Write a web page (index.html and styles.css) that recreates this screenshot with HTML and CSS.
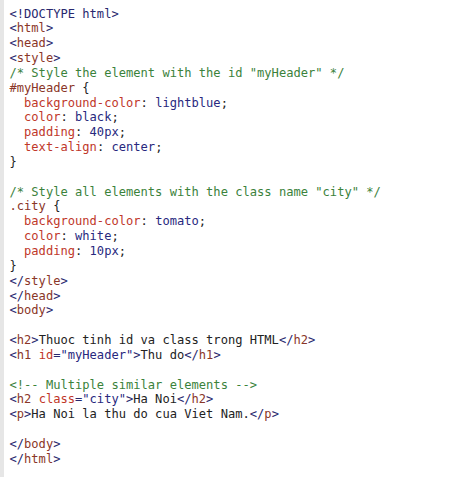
FILE: index.html
```html
<!DOCTYPE html>
<html>
<head>
<meta charset="utf-8">
<link rel="stylesheet" href="styles.css">
</head>
<body>
<div class="editor">
<pre class="code"><span class="b">&lt;!DOCTYPE html&gt;</span>
<span class="b">&lt;</span><span class="t">html</span><span class="b">&gt;</span>
<span class="b">&lt;</span><span class="t">head</span><span class="b">&gt;</span>
<span class="b">&lt;</span><span class="t">style</span><span class="b">&gt;</span>
<span class="c">/* Style the element with the id "myHeader" */</span>
<span class="t">#myHeader</span> <span class="x">{</span>
  <span class="p">background-color</span><span class="x">:</span> <span class="v">lightblue</span><span class="x">;</span>
  <span class="p">color</span><span class="x">:</span> <span class="v">black</span><span class="x">;</span>
  <span class="p">padding</span><span class="x">:</span> <span class="v">40px</span><span class="x">;</span>
  <span class="p">text-align</span><span class="x">:</span> <span class="v">center</span><span class="x">;</span>
<span class="x">}</span>

<span class="c">/* Style all elements with the class name "city" */</span>
<span class="t">.city</span> <span class="x">{</span>
  <span class="p">background-color</span><span class="x">:</span> <span class="v">tomato</span><span class="x">;</span>
  <span class="p">color</span><span class="x">:</span> <span class="v">white</span><span class="x">;</span>
  <span class="p">padding</span><span class="x">:</span> <span class="v">10px</span><span class="x">;</span>
<span class="x">}</span>
<span class="b">&lt;/</span><span class="t">style</span><span class="b">&gt;</span>
<span class="b">&lt;/</span><span class="t">head</span><span class="b">&gt;</span>
<span class="b">&lt;</span><span class="t">body</span><span class="b">&gt;</span>

<span class="b">&lt;</span><span class="t">h2</span><span class="b">&gt;</span>Thuoc tinh id va class trong HTML<span class="b">&lt;/</span><span class="t">h2</span><span class="b">&gt;</span>
<span class="b">&lt;</span><span class="t">h1</span> <span class="a">id</span><span class="b">=</span><span class="v">"myHeader"</span><span class="b">&gt;</span>Thu do<span class="b">&lt;/</span><span class="t">h1</span><span class="b">&gt;</span>

<span class="c">&lt;!-- Multiple similar elements --&gt;</span>
<span class="b">&lt;</span><span class="t">h2</span> <span class="a">class</span><span class="b">=</span><span class="v">"city"</span><span class="b">&gt;</span>Ha Noi<span class="b">&lt;/</span><span class="t">h2</span><span class="b">&gt;</span>
<span class="b">&lt;</span><span class="t">p</span><span class="b">&gt;</span>Ha Noi la thu do cua Viet Nam.<span class="b">&lt;/</span><span class="t">p</span><span class="b">&gt;</span>

<span class="b">&lt;/</span><span class="t">body</span><span class="b">&gt;</span>
<span class="b">&lt;/</span><span class="t">html</span><span class="b">&gt;</span></pre>
</div>
</body>
</html>
```

FILE: styles.css
```css
html, body {
  margin: 0;
  padding: 0;
  background: #ffffff;
}
.editor {
  border-left: 4px solid #e6e6e6;
  min-height: 477px;
  box-sizing: border-box;
  padding: 6.5px 0 0 5.5px;
}
.code {
  margin: 0;
  font-family: "DejaVu Sans Mono", "Liberation Mono", monospace;
  font-size: 12.1px;
  line-height: 14.85px;
  color: #222222;
  white-space: pre;
}
.b { color: #28286e; }
.t { color: #8a3628; }
.a { color: #bf3528; }
.v { color: #28287e; }
.p { color: #c0372a; }
.c { color: #3b823b; }
.x { color: #222222; }
```
